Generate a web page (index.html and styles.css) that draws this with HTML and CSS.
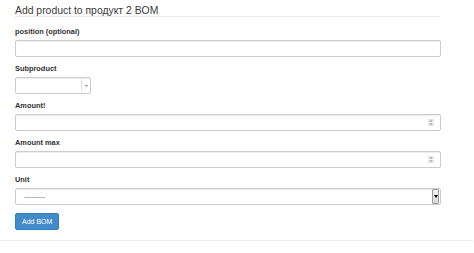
FILE: index.html
```html
<!DOCTYPE html>
<html>
<head>
<meta charset="utf-8">
<link rel="stylesheet" href="styles.css">
</head>
<body>
<div class="page">
  <form class="bom-form">
    <div class="legend">Add product to продукт 2 BOM</div>
    <div class="form-group">
      <label class="label">position (optional)</label>
      <div class="field"><input class="control" type="text"></div>
    </div>
    <div class="form-group">
      <label class="label">Subproduct</label>
      <div class="field field-small">
        <span class="control"></span>
        <span class="small-arrow"><svg width="3" height="2" viewBox="0 0 3 2"><path d="M0 0h3L1.5 2z" fill="#888"/></svg></span>
      </div>
    </div>
    <div class="form-group">
      <label class="label">Amount!</label>
      <div class="field">
        <input class="control" type="text">
        <span class="spinner"><svg width="6" height="7" viewBox="0 0 6 7"><rect x="0" y="0" width="6" height="3.2" fill="#e4e4e4"/><rect x="0" y="3.8" width="6" height="3.2" fill="#e4e4e4"/><path d="M1.8 2.4h2.4L3 1z M1.8 4.6h2.4L3 6z" fill="#8a8a8a"/></svg></span>
      </div>
    </div>
    <div class="form-group">
      <label class="label">Amount max</label>
      <div class="field">
        <input class="control" type="text">
        <span class="spinner"><svg width="6" height="7" viewBox="0 0 6 7"><rect x="0" y="0" width="6" height="3.2" fill="#e4e4e4"/><rect x="0" y="3.8" width="6" height="3.2" fill="#e4e4e4"/><path d="M1.8 2.4h2.4L3 1z M1.8 4.6h2.4L3 6z" fill="#8a8a8a"/></svg></span>
      </div>
    </div>
    <div class="form-group last">
      <label class="label">Unit</label>
      <div class="field">
        <span class="control select-text">---------</span>
        <span class="drop-btn"><svg width="4" height="3" viewBox="0 0 4 3"><path d="M0 0h4L2 3z" fill="#000"/></svg></span>
      </div>
    </div>
    <button class="btn" type="button">Add BOM</button>
  </form>
  <div class="footer"></div>
</div>
</body>
</html>
```
FILE: styles.css
```css
html, body {
  margin: 0;
  padding: 0;
  background: #fff;
}
body {
  font-family: "Liberation Sans", Arial, sans-serif;
  color: #333;
}
.page {
  width: 474px;
}
.bom-form {
  padding: 6px 33px 0 15px;
}
.legend {
  font-size: 10.4px;
  line-height: 10px;
  height: 10px;
  color: #3a3a3a;
  border-bottom: 1px solid #ebebeb;
  margin-bottom: 10px;
  margin-right: 1px;
  white-space: nowrap;
}
.form-group {
  margin-bottom: 7px;
}
.form-group.last {
  margin-bottom: 8px;
}
.label {
  display: block;
  font-size: 7.4px;
  line-height: 10px;
  font-weight: bold;
  margin-bottom: 3px;
  color: #333;
}
.field {
  display: flex;
  align-items: center;
  box-sizing: border-box;
  height: 17px;
  border: 1px solid #ccc;
  border-radius: 2px;
  box-shadow: inset 0 1px 1px rgba(0,0,0,.075);
  background: #fff;
}
.field-small {
  width: 76px;
}
.control {
  flex: 1;
  min-width: 0;
  height: 100%;
  border: 0;
  padding: 0;
  margin: 0;
  background: transparent;
  outline: none;
  font-family: inherit;
  font-size: 7px;
}
.small-arrow {
  display: flex;
  align-items: center;
  justify-content: center;
  width: 8px;
  height: 13px;
  border-left: 1px solid #e6e6e6;
}
.spinner {
  display: flex;
  margin-right: 6px;
}
.select-text {
  display: flex;
  align-items: center;
  padding-left: 8px;
  font-size: 7px;
  color: #666;
}
.drop-btn {
  display: flex;
  align-items: center;
  justify-content: center;
  box-sizing: border-box;
  width: 7px;
  height: 15px;
  margin-right: 1px;
  border: 1px solid #9a9a9a;
  border-radius: 1px;
  background: linear-gradient(#f2f2f2, #d8d8d8);
}
.btn {
  display: block;
  box-sizing: border-box;
  height: 17px;
  padding: 0 6px;
  border: 1px solid #357ebd;
  border-radius: 2px;
  background: #428bca;
  color: #fff;
  font-family: inherit;
  font-size: 7px;
  line-height: 15px;
}
.footer {
  margin-top: 10px;
  width: 473px;
  border-top: 1px solid #ececec;
  height: 12px;
}
```
